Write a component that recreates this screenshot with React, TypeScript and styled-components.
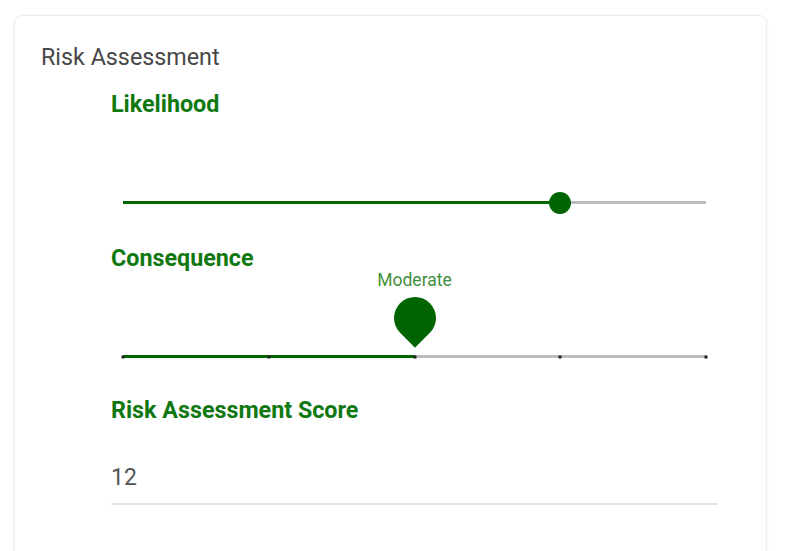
import styled, { createGlobalStyle } from 'styled-components';

const GREEN = '#006400';

const GlobalStyle = createGlobalStyle`
  body {
    margin: 0;
    background: #ffffff;
    font-family: Roboto, "Noto Sans", sans-serif;
  }
`;

type Mark = { value: number };

const marks: Mark[] = [{ value: 0 }, { value: 25 }, { value: 50 }, { value: 75 }, { value: 100 }];

const App = () => {
  return (
    <>
      <GlobalStyle />
      <StyledPage>
        <StyledCard>
          <StyledTitle>Risk Assessment</StyledTitle>
          <StyledSection>
            <StyledLabel>Likelihood</StyledLabel>
            <StyledSliderRoot $gapBelow={41}>
              <StyledRail>
                <StyledFill style={{ width: '75%' }} />
                <StyledThumb style={{ left: '75%' }} />
              </StyledRail>
            </StyledSliderRoot>

            <StyledLabel>Consequence</StyledLabel>
            <StyledSliderRoot $gapBelow={39}>
              <StyledRail>
                <StyledFill style={{ width: '50%' }} />
                {marks.map((m) => (
                  <StyledMark key={m.value} style={{ left: `${m.value}%` }} />
                ))}
                <StyledValueText style={{ left: '50%' }}>Moderate</StyledValueText>
                <StyledPin style={{ left: '50%' }} />
              </StyledRail>
            </StyledSliderRoot>

            <StyledLabel>Risk Assessment Score</StyledLabel>
            <StyledValueField>12</StyledValueField>
          </StyledSection>
        </StyledCard>
      </StyledPage>
    </>
  );
};

export default App;

const StyledPage = styled.div`
  height: 551px;
  overflow: hidden;
  box-sizing: border-box;
  padding: 15px 28px 0 14px;
`;

const StyledCard = styled.section`
  min-height: 600px;
  border: 1px solid #ececec;
  border-radius: 8px;
  box-shadow: 0 1px 4px rgba(0, 0, 0, 0.05);
  padding: 28px 48px 60px 26px;
  display: flex;
  flex-direction: column;
`;

const StyledTitle = styled.div`
  font-size: 23.3px;
  line-height: 27px;
  color: #474747;
  margin-bottom: 20px;
`;

const StyledSection = styled.div`
  margin-left: 70px;
  display: flex;
  flex-direction: column;
`;

const StyledLabel = styled.div`
  font-size: 23.3px;
  line-height: 27px;
  font-weight: 700;
  color: #107810;
`;

const StyledSliderRoot = styled.div<{ $gapBelow: number }>`
  padding: 83px 12px ${({ $gapBelow }) => $gapBelow}px;
`;

const StyledRail = styled.div`
  position: relative;
  height: 3px;
  background: #bdbdbd;
`;

const StyledFill = styled.div`
  position: absolute;
  left: 0;
  top: 0;
  bottom: 0;
  background: ${GREEN};
`;

const StyledThumb = styled.div`
  position: absolute;
  top: 50%;
  width: 22px;
  height: 22px;
  border-radius: 50%;
  background: ${GREEN};
  transform: translate(-50%, -50%);
`;

const StyledMark = styled.div`
  position: absolute;
  top: 50%;
  width: 3px;
  height: 3px;
  background: #222;
  transform: translate(-50%, -50%);
`;

const StyledPin = styled.div`
  position: absolute;
  top: -58px;
  width: 42px;
  height: 42px;
  margin-left: -21px;
  background: ${GREEN};
  border-radius: 50% 50% 50% 0;
  transform: rotate(-45deg);
`;

const StyledValueText = styled.div`
  position: absolute;
  top: -85px;
  font-size: 17.5px;
  line-height: 20px;
  color: #3f8f3f;
  white-space: nowrap;
  transform: translateX(-50%);
`;

const StyledValueField = styled.div`
  margin-top: 40px;
  padding-bottom: 11px;
  border-bottom: 2px solid #e4e4e4;
  font-size: 23px;
  line-height: 28px;
  color: #555555;
`;
